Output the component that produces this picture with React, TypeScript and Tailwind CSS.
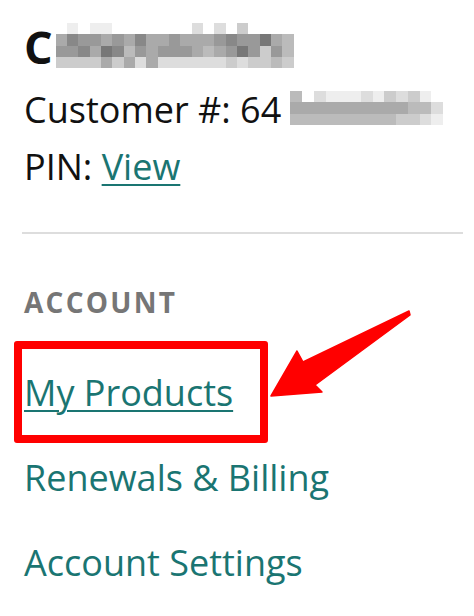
import React from "react";

const shades = [
  "bg-transparent",
  "bg-[#eeeeee]",
  "bg-[#dddddd]",
  "bg-[#cccccc]",
  "bg-[#bbbbbb]",
  "bg-[#aaaaaa]",
  "bg-[#999999]",
  "bg-[#888888]",
  "bg-[#777777]",
];

// blurred-out name and customer number, as a pixel mosaic
const nameMosaic = [
  "010110000000202030000",
  "576656575565556766854",
  "667587465666545686364",
  "333353525222222323343",
];

const numberMosaic = [
  "4021112132310",
  "5555555555442",
  "4444444443321",
];

function Mosaic({ rows, className }: { rows: string[]; className: string }) {
  return (
    <div className={`flex flex-col ${className}`}>
      {rows.map((row, r) => (
        <div key={r} className="flex flex-1">
          {row.split("").map((c, i) => (
            <div key={i} className={`flex-1 ${shades[Number(c)]}`} />
          ))}
        </div>
      ))}
    </div>
  );
}

const links = ["Renewals & Billing", "Account Settings"];

export default function App() {
  return (
    <div className="relative w-[474px] h-[616px] overflow-hidden bg-white font-['Open_Sans',sans-serif] text-[#111]">
      <div className="pl-[24px] pr-[11px] pt-[18px]">
        <div className="flex items-start">
          <span className="text-[45px] font-bold leading-[57px]">C</span>
          <Mosaic rows={nameMosaic} className="ml-[3px] mt-[5px] w-[238px] h-[45px]" />
        </div>

        <div className="mt-[6px] flex items-start">
          <span className="text-[36px] leading-[57px] whitespace-nowrap">Customer #: 64</span>
          <Mosaic rows={numberMosaic} className="ml-[9px] mt-[10px] w-[153px] h-[34px]" />
        </div>

        <div className="text-[36px] leading-[57px]">
          PIN:{" "}
          <a className="text-[#1a7572] underline decoration-2 underline-offset-4">View</a>
        </div>

        <div className="mt-[37px] -ml-[2px] h-[2px] bg-[#dddddd]" />

        <div className="mt-[48px] text-[28px] font-bold leading-[40px] tracking-[0.08em] text-[#767676]">
          ACCOUNT
        </div>

        <div className="mt-[28px] flex flex-col text-[36px] leading-[85px] text-[#1a7572]">
          <div className="relative">
            <a className="underline decoration-2 underline-offset-4">My Products</a>
            <div className="absolute -left-[10px] -top-[9px] w-[254px] h-[102px] rounded-[3px] border-[8px] border-[#ff0000]" />
          </div>
          {links.map((l) => (
            <a key={l}>{l}</a>
          ))}
        </div>
      </div>

      <svg
        className="absolute inset-0 pointer-events-none"
        width="474"
        height="616"
        viewBox="0 0 474 616"
      >
        <polygon
          points="409,311 303,362 297,351 271,396 322,392 315,385 410,315"
          fill="#ff0000"
          stroke="#ff0000"
          strokeWidth="1.5"
          strokeLinejoin="round"
        />
      </svg>
    </div>
  );
}
